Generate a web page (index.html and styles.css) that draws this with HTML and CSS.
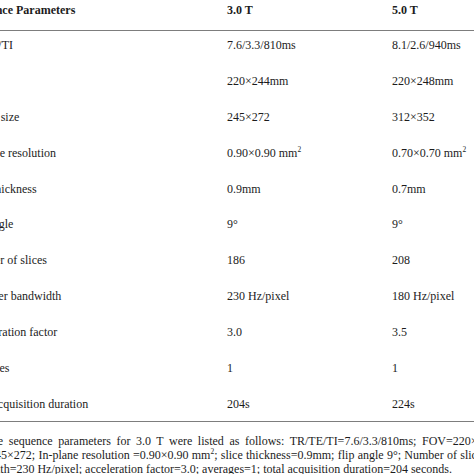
FILE: index.html
```html
<!DOCTYPE html>
<html lang="en">
<head>
<meta charset="utf-8">
<title>Sequence Parameters</title>
<link rel="stylesheet" href="styles.css">
</head>
<body>
<div class="page">
  <table class="params">
    <colgroup>
      <col class="c1"><col class="c2"><col class="c3">
    </colgroup>
    <thead>
      <tr><th>Sequence Parameters</th><th>3.0 T</th><th>5.0 T</th></tr>
    </thead>
    <tbody>
      <tr><td>TR/TE/TI</td><td>7.6/3.3/810ms</td><td>8.1/2.6/940ms</td></tr>
      <tr><td>FOV</td><td>220×244mm</td><td>220×248mm</td></tr>
      <tr><td>Matrix size</td><td>245×272</td><td>312×352</td></tr>
      <tr><td>In-plane resolution</td><td>0.90×0.90 mm<sup>2</sup></td><td>0.70×0.70 mm<sup>2</sup></td></tr>
      <tr><td>Slice thickness</td><td>0.9mm</td><td>0.7mm</td></tr>
      <tr><td>Flip angle</td><td>9°</td><td>9°</td></tr>
      <tr><td>Number of slices</td><td>186</td><td>208</td></tr>
      <tr><td>Receiver bandwidth</td><td>230 Hz/pixel</td><td>180 Hz/pixel</td></tr>
      <tr><td>Acceleration factor</td><td>3.0</td><td>3.5</td></tr>
      <tr><td>Averages</td><td>1</td><td>1</td></tr>
      <tr><td>Total acquisition duration</td><td>204s</td><td>224s</td></tr>
    </tbody>
  </table>
  <div class="note">
    <div class="line l1">The sequence parameters for 3.0 T were listed as follows: TR/TE/TI=7.6/3.3/810ms; FOV=220×244mm;</div>
    <div class="line l2">245×272; In-plane resolution =0.90×0.90 mm<sup>2</sup>; slice thickness=0.9mm; flip angle 9°; Number of slices=186;</div>
    <div class="line l3">bandwidth=230 Hz/pixel; acceleration factor=3.0; averages=1; total acquisition duration=204 seconds.</div>
  </div>
</div>
</body>
</html>
```

FILE: styles.css
```css
html, body {
  margin: 0;
  padding: 0;
  background: #ffffff;
}

body {
  font-family: "Liberation Serif", "Times New Roman", serif;
  color: #1c1c1c;
}

.page {
  width: 474px;
  height: 474px;
  overflow: hidden;
}

.params {
  margin-left: -35px;
  width: 587px;
  table-layout: fixed;
  border-collapse: collapse;
  font-size: 12px;
  line-height: 14px;
}

.params .c1 { width: 262px; }
.params .c2 { width: 165px; }
.params .c3 { width: 160px; }

.params th {
  font-weight: bold;
  text-align: left;
  padding: 3px 0 13px;
  border-bottom: 1.5px solid #7d7d7d;
}

.params td {
  text-align: left;
  padding: 7px 0 14.9px;
  white-space: nowrap;
}

.params tbody tr:last-child td {
  padding-bottom: 10px;
  border-bottom: 1.5px solid #7d7d7d;
}

sup {
  font-size: 0.62em;
  line-height: 0;
  vertical-align: super;
}

.note {
  margin-top: 12px;
  font-size: 12px;
  line-height: 14px;
}

.line {
  white-space: nowrap;
}

.l1 {
  margin-left: -15.5px;
  width: 533px;
  text-align: justify;
  text-align-last: justify;
  white-space: normal;
}

.l2 {
  margin-left: -11px;
  width: 526px;
  text-align: justify;
  text-align-last: justify;
  white-space: normal;
}

.l3 {
  margin-left: -41px;
}
```
